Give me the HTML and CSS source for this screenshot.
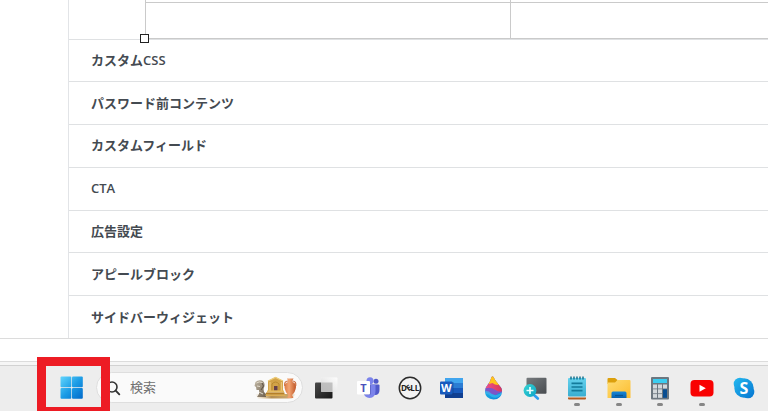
FILE: index.html
```html
<!DOCTYPE html>
<html lang="ja">
<head>
    <meta charset="UTF-8">
    <meta name="viewport" content="width=device-width, initial-scale=1.0">
    <title>投稿の編集</title>
    <link rel="stylesheet" href="styles.css">
</head>
<body>
    <main class="editor">
        <div class="content">
            <div class="block">
                <table class="grid">
                    <tr class="cut"><td></td><td></td></tr>
                    <tr><td></td><td></td></tr>
                </table>
                <span class="handle"></span>
            </div>
            <div class="panels">
                <button class="panel" type="button">カスタムCSS</button>
                <button class="panel" type="button">パスワード前コンテンツ</button>
                <button class="panel" type="button">カスタムフィールド</button>
                <button class="panel" type="button">CTA</button>
                <button class="panel" type="button">広告設定</button>
                <button class="panel" type="button">アピールブロック</button>
                <button class="panel" type="button">サイドバーウィジェット</button>
            </div>
        </div>
    </main>
    <div class="window-edge"></div>

    <footer class="taskbar">
        <button class="start" type="button" aria-label="スタート">
            <svg width="24" height="24" viewBox="0 0 24 24">
                <defs>
                    <linearGradient id="win" gradientUnits="userSpaceOnUse" x1="1" y1="1" x2="23" y2="23">
                        <stop offset="0" stop-color="#5fd3fc"/>
                        <stop offset=".5" stop-color="#1b9be5"/>
                        <stop offset="1" stop-color="#0068c9"/>
                    </linearGradient>
                </defs>
                <g fill="url(#win)">
                    <rect x="0.5" y="0.5" width="10.800" height="10.800" rx="1"/>
                    <rect x="12" y="0.5" width="10.800" height="10.800" rx="1"/>
                    <rect x="0.5" y="12" width="10.800" height="10.800" rx="1"/>
                    <rect x="12" y="12" width="10.800" height="10.800" rx="1"/>
                </g>
            </svg>
        </button>

        <div class="search">
            <label for="q" aria-label="検索">
                <svg width="18" height="18" viewBox="0 0 18 18">
                    <circle cx="8" cy="8" r="5" fill="none" stroke="#333" stroke-width="1.6"/>
                    <path d="M11.700 11.700 L15.300 15.300" stroke="#333" stroke-width="1.9" stroke-linecap="round"/>
                </svg>
            </label>
            <input id="q" type="text" placeholder="検索">
            <svg class="museum" width="44" height="24" viewBox="0 0 44 24">
                <defs>
                    <linearGradient id="bust" x1="0" y1="0" x2="1" y2="1">
                        <stop offset="0" stop-color="#c2b8a6"/>
                        <stop offset="1" stop-color="#6d5f4d"/>
                    </linearGradient>
                    <linearGradient id="vase" x1="0" y1="0" x2="1" y2="0">
                        <stop offset="0" stop-color="#dc7a44"/>
                        <stop offset=".4" stop-color="#f3a674"/>
                        <stop offset="1" stop-color="#bf5628"/>
                    </linearGradient>
                    <linearGradient id="sand" x1="0" y1="0" x2="1" y2="0">
                        <stop offset="0" stop-color="#c9a56a" stop-opacity="0"/>
                        <stop offset=".4" stop-color="#b58e50"/>
                        <stop offset=".8" stop-color="#c9a56a"/>
                        <stop offset="1" stop-color="#c9a56a" stop-opacity="0"/>
                    </linearGradient>
                </defs>
                <path d="M2 18 H43 L39 22.500 H5 Z" fill="url(#sand)"/>
                <path d="M2.500 6 Q5 3.500 9 4.500 Q12 6 11.500 10 L10.500 13 L11 16 L13 18 V21 H4 L6 18 V14 L3.500 14 L3 11 L1.500 10 Z" fill="url(#bust)"/>
                <path d="M3.500 7 Q6 5 9.500 6.500 M4 10 L7 10.500 M6 16 L10 18" stroke="#e3dccd" fill="none"/>
                <path d="M9 7 L10.500 10 L8 14" stroke="#5d5144" fill="none"/>
                <path d="M15 5 L22.500 1 L30 5 V15 H15 Z" fill="#d3a348"/>
                <path d="M15 5 L22.500 1.500 L30 5" stroke="#eccb79" stroke-width="1.300" fill="none"/>
                <path d="M17 6 V15 M28.500 6 V15" stroke="#eac477" stroke-width="1.300"/>
                <path d="M19 15 V8 Q22.500 4 26 8 V15" stroke="#b98930" fill="none"/>
                <rect x="21" y="10" width="3.500" height="4.500" fill="#66404a"/>
                <rect x="14" y="14.500" width="17" height="2" fill="#e5bc62"/>
                <rect x="13" y="16.500" width="18.500" height="2" fill="#b57f27"/>
                <rect x="12.500" y="18.500" width="20" height="1.500" fill="#dcae54"/>
                <path d="M34 2.500 H40.500 L39.500 4.500 V6 Q43 7 43 11 Q42.500 16 39 19 L40.500 22 H34 L35.500 19 Q32 16 31.500 11 Q31.500 7 35 6 V4.500 Z" fill="url(#vase)"/>
                <path d="M35 5 Q31 5 31.800 10 M39.500 5 Q43.500 5 42.700 10" stroke="#cc6a3a" stroke-width="1.200" fill="none"/>
            </svg>
        </div>

        <nav class="apps">
            <button class="app" type="button" aria-label="タスク ビュー">
                <svg width="24" height="24" viewBox="0 0 24 24">
                    <defs>
                        <linearGradient id="dark" x1="0" y1="0" x2="1" y2="1"><stop offset="0" stop-color="#4a4a4a"/><stop offset="1" stop-color="#171717"/></linearGradient>
                        <linearGradient id="light" x1="0" y1="1" x2="1" y2="0"><stop offset="0" stop-color="#d5d5d5"/><stop offset="1" stop-color="#fff"/></linearGradient>
                    </defs>
                    <rect x="1" y="6.500" width="17.500" height="16" rx="1" fill="url(#dark)"/>
                    <path d="M7 1.500 H23 V16 H18.500 V6.500 H7 Z" fill="#f4f4f4"/>
                    <rect x="7" y="1.500" width="16.500" height="14.500" rx="1" fill="url(#light)" opacity=".8"/>
                    <rect x="7" y="6.500" width="11.500" height="9.500" fill="#bdbdbd" opacity=".7"/>
                </svg>
            </button>
            <button class="app" type="button" aria-label="Teams">
                <svg width="24" height="24" viewBox="0 0 24 24">
                    <circle cx="20" cy="5.300" r="2.500" fill="#5059c9"/>
                    <path d="M15 8.500 H22.500 Q23.500 8.500 23.500 9.500 V14 Q23.500 19 19 19 Q16 19 15 17 Z" fill="#5059c9"/>
                    <circle cx="14" cy="4.800" r="3.500" fill="#7b83eb"/>
                    <path d="M9 8.500 H18.500 Q19.500 8.500 19.500 9.500 V15 Q19.500 21.800 13.500 22 Q8.500 21.500 7.500 17 Z" fill="#7b83eb"/>
                    <path d="M9 8.500 H15 V17.500 Q15 19 13 19 H8 Z" fill="#555bb8" opacity=".65"/>
                    <rect x="1" y="5" width="13" height="13.500" rx="1" fill="#fff"/>
                    <text x="7.500" y="15.800" class="mark teams" text-anchor="middle">T</text>
                </svg>
            </button>
            <button class="app" type="button" aria-label="Dell">
                <svg width="24" height="24" viewBox="0 0 24 24">
                    <circle cx="12" cy="12" r="10.700" fill="#f3f3f3" stroke="#2b2b2b" stroke-width="1.500"/>
                    <text x="5.900" y="14.800" class="mark dell" text-anchor="middle">D</text>
                    <text x="10.700" y="14.800" class="mark dell" text-anchor="middle" transform="rotate(-35 10.7 12)">E</text>
                    <text x="16.800" y="14.800" class="mark dell" text-anchor="middle">LL</text>
                </svg>
            </button>
            <button class="app" type="button" aria-label="Word">
                <svg width="24" height="24" viewBox="0 0 24 24">
                    <rect x="6" y="2" width="18" height="6" fill="#41a5ee"/>
                    <rect x="6" y="7" width="18" height="5.500" fill="#2b7cd3"/>
                    <rect x="6" y="12" width="18" height="5.500" fill="#185abd"/>
                    <rect x="6" y="17" width="18" height="5" fill="#103f91"/>
                    <path d="M6 6 H14.500 V19 H6 Z" fill="#123b78" opacity=".45"/>
                    <rect x="1" y="5.500" width="12.500" height="13" rx="1" fill="#185abd"/>
                    <text x="7.200" y="16" class="mark word" text-anchor="middle">W</text>
                </svg>
            </button>
            <button class="app" type="button" aria-label="ペイント 3D">
                <svg width="24" height="24" viewBox="0 0 24 24">
                    <defs>
                        <clipPath id="drop"><path d="M12 0.500 Q14.500 5 18 9 Q21 12 21 15 Q20.500 23.500 12.500 23.500 Q4.300 23 4 15.500 Q4 12 6.500 9 Q10 5 10.300 1.500 Q11 0 12 0.500 Z"/></clipPath>
                        <linearGradient id="pink" x1="0" y1="0" x2="1" y2="0"><stop offset="0" stop-color="#f0569a"/><stop offset="1" stop-color="#d8324d"/></linearGradient>
                        <linearGradient id="aqua" x1="0" y1="0" x2="1" y2="1"><stop offset="0" stop-color="#2ad4ee"/><stop offset="1" stop-color="#087bd7"/></linearGradient>
                    </defs>
                    <g clip-path="url(#drop)">
                        <rect width="24" height="24" fill="url(#aqua)"/>
                        <path d="M0 12 L9 9 L24 11 V18 Q19 15 15 19 Q9 19 3 15 Z" fill="#7d55c7"/>
                        <path d="M0 0 H24 V14 Q19 17 14.500 14 Q9 10 3 13 Z" fill="url(#pink)"/>
                        <path d="M7 0 H14 L18.500 9 Q14 9.500 11.500 7 L8 8 Z" fill="#ffc51b"/>
                        <path d="M3 14.500 Q8 14.500 11 18 Q16 21 21 16 V18 Q16 24 10 20.500 Q7 17 3 18 Z" fill="#38b9ef" opacity=".7"/>
                    </g>
                </svg>
            </button>
            <button class="app" type="button" aria-label="拡大鏡">
                <svg width="24" height="24" viewBox="0 0 24 24">
                    <defs>
                        <linearGradient id="screen" x1="0" y1="0" x2="1" y2="1"><stop offset="0" stop-color="#777b7e"/><stop offset="1" stop-color="#484c50"/></linearGradient>
                        <linearGradient id="lens" x1="0" y1="0" x2="1" y2="1"><stop offset="0" stop-color="#38d5d4"/><stop offset="1" stop-color="#0ca4c5"/></linearGradient>
                    </defs>
                    <rect x="3.500" y="1.700" width="20" height="16" rx="1" fill="url(#screen)"/>
                    <path d="M11 19 L14.800 22.500" stroke="#2b9df0" stroke-width="2.600" stroke-linecap="round"/>
                    <circle cx="7" cy="14.500" r="6.400" fill="url(#lens)"/>
                    <path d="M7 11 V18 M3.500 14.500 H10.500" stroke="#e9ffff" stroke-width="1.700"/>
                </svg>
            </button>
            <button class="app open" type="button" aria-label="メモ帳">
                <svg width="24" height="24" viewBox="0 0 24 24">
                    <defs><linearGradient id="note" x1="0" y1="0" x2="0" y2="1"><stop offset="0" stop-color="#65d2ee"/><stop offset="1" stop-color="#38add0"/></linearGradient></defs>
                    <rect x="3" y="19" width="18" height="4.500" rx="1" fill="#b35a20"/>
                    <rect x="3" y="19" width="18" height="2.500" fill="#f0e7df"/>
                    <rect x="3" y="2" width="18" height="18.500" rx="1" fill="url(#note)"/>
                    <path d="M6 .5 V3.500 M9 .5 V3.500 M12 .5 V3.500 M15 .5 V3.500 M18 .5 V3.500" stroke="#14728e" stroke-width="1.500"/>
                    <path d="M6.500 7.300 H17.500 M6.500 11 H17.500 M6.500 14.700 H17.500" stroke="#137b9b" stroke-width="1.700"/>
                </svg>
            </button>
            <button class="app open" type="button" aria-label="エクスプローラー">
                <svg width="24" height="24" viewBox="0 0 24 24">
                    <defs>
                        <linearGradient id="folder" x1="0" y1="0" x2="1" y2="1"><stop offset="0" stop-color="#ffdc72"/><stop offset="1" stop-color="#fcbc2e"/></linearGradient>
                        <linearGradient id="tray" x1="0" y1="0" x2="0" y2="1"><stop offset="0" stop-color="#1687d8"/><stop offset="1" stop-color="#0861ae"/></linearGradient>
                    </defs>
                    <path d="M0.500 3 Q.5 2 1.500 2 H8 L10.500 4 V8 H.5 Z" fill="#dca00c"/>
                    <path d="M.5 6.500 H8 L10.500 4 H22.500 Q23.500 4 23.500 5 V22 H.5 Z" fill="url(#folder)"/>
                    <path d="M4.500 22 V17 Q4.500 15.500 6 15.500 H18 Q19.500 15.500 19.500 17 V22 Z" fill="url(#tray)"/>
                    <path d="M8 19.500 H16" stroke="#075493" stroke-width="1.200"/>
                </svg>
            </button>
            <button class="app open" type="button" aria-label="電卓">
                <svg width="24" height="24" viewBox="0 0 24 24">
                    <rect x="3" y="1" width="18" height="22.500" rx="1" fill="#6c7780"/>
                    <rect x="5" y="3" width="14" height="4" fill="#3ccdf0"/>
                    <g fill="#d3d8dc">
                        <rect x="5" y="8.500" width="4" height="4"/><rect x="10" y="8.500" width="4" height="4"/><rect x="15" y="8.500" width="4" height="4"/>
                        <rect x="5" y="13.300" width="4" height="4"/><rect x="10" y="13.300" width="4" height="4"/>
                        <rect x="5" y="18.100" width="4" height="3.700"/><rect x="10" y="18.100" width="4" height="3.700"/>
                    </g>
                    <rect x="15" y="13.300" width="4" height="8.500" fill="#084d91"/>
                </svg>
            </button>
            <button class="app open" type="button" aria-label="YouTube">
                <svg width="24" height="24" viewBox="0 0 24 24">
                    <rect x=".5" y="4" width="23" height="16.500" rx="4" fill="#f90202"/>
                    <path d="M9.500 8.800 L15.800 12.200 L9.500 15.700 Z" fill="#fff"/>
                </svg>
            </button>
            <button class="app" type="button" aria-label="Skype">
                <svg width="24" height="24" viewBox="0 0 24 24">
                    <defs><linearGradient id="sky" gradientUnits="userSpaceOnUse" x1="3" y1="3" x2="21" y2="21"><stop offset="0" stop-color="#22b5ee"/><stop offset="1" stop-color="#0779d2"/></linearGradient></defs>
                    <g fill="url(#sky)">
                        <circle cx="8" cy="8" r="6.300"/>
                        <circle cx="16" cy="16" r="6.300"/>
                        <circle cx="12" cy="12" r="9.700"/>
                    </g>
                    <text x="12" y="17.700" class="mark skype" text-anchor="middle">S</text>
                </svg>
            </button>
        </nav>
        <div class="highlight"></div>
    </footer>
</body>
</html>
```

FILE: styles.css
```css
* {
    box-sizing: border-box;
}
body {
    margin: 0;
    height: 100vh;
    display: flex;
    flex-direction: column;
    overflow: hidden;
    background: #fff;
    font-family: "Open Sans", "Noto Sans CJK JP", sans-serif;
    font-size: 13px;
    color: #444a51;
}
button {
    padding: 0;
    border: none;
    background: none;
    font: inherit;
    color: inherit;
}
svg {
    display: block;
}

/* editor */
.editor {
    flex: 1;
    display: flex;
    padding-left: 68px;
    border-bottom: 1px solid #dcdcdc;
}
.content {
    flex: 1;
    display: flex;
    flex-direction: column;
    border-left: 1px solid #e2e4e7;
}
.block {
    position: relative;
    padding-left: 76px;
}
.grid {
    width: 100%;
    table-layout: fixed;
    border-collapse: collapse;
}
.grid td {
    height: 36px;
    padding: 0;
    border: 1px solid #cacaca;
    border-right: none;
}
.grid td:first-child {
    width: 365px;
}
.grid .cut td {
    height: 2px;
    border-top: none;
}
.handle {
    position: absolute;
    left: 71px;
    bottom: -4px;
    width: 9px;
    height: 9px;
    border: 1px solid #222;
    background: #fff;
}
.panels {
    flex: 1;
    display: flex;
    flex-direction: column;
}
.panel {
    flex: 1;
    padding: 0 0 2px 22px;
    border-top: 1px solid #dfe1e3;
    text-align: left;
    font-weight: 600;
}

/* bottom edge of the browser window */
.window-edge {
    height: 26px;
    border-bottom: 3px solid #f6f6f6;
    box-shadow: inset 0 -1px #dcdcdc;
}

/* taskbar */
.taskbar {
    position: relative;
    display: flex;
    align-items: center;
    height: 46px;
    padding: 0 12px 2px 60px;
    border-top: 1px solid #d2d2d2;
    background: #ededed;
}
.search {
    display: flex;
    align-items: center;
    width: 207px;
    height: 31px;
    margin: 0 11px 0 12px;
    padding: 0 5px 0 7px;
    border: 1px solid #dedede;
    border-radius: 16px;
    background: #fafafa;
}
.search input {
    flex: 1;
    min-width: 0;
    margin-left: 8px;
    padding: 0 0 2px;
    border: none;
    outline: none;
    background: none;
    font: inherit;
}
.search input::placeholder {
    color: #707070;
}
.apps {
    flex: 1;
    display: flex;
    justify-content: space-between;
}
.app {
    position: relative;
    width: 24px;
    height: 24px;
}
.app.open::after {
    content: "";
    position: absolute;
    left: 9px;
    bottom: -6px;
    width: 6px;
    height: 3px;
    border-radius: 2px;
    background: #868686;
}
.mark {
    font-family: "Open Sans", sans-serif;
    font-weight: 700;
}
.teams {
    font-size: 11px;
    fill: #4b53bc;
}
.word {
    font-size: 11px;
    fill: #fff;
}
.dell {
    font-size: 8px;
    fill: #222;
}
.skype {
    font-size: 16px;
    fill: #fff;
}
.highlight {
    position: absolute;
    left: 37px;
    top: -9px;
    width: 73px;
    height: 59px;
    border: 9px solid #ed1c24;
}
```
